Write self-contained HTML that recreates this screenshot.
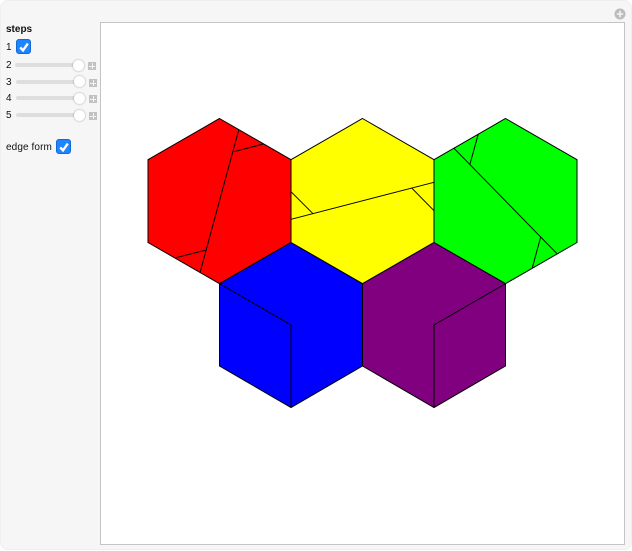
<!DOCTYPE html>
<html>
<head>
<meta charset="utf-8">
<style>
html,body{margin:0;padding:0;background:#fff;}
#page{position:relative;width:632px;height:551px;overflow:hidden;background:#fff;font-family:"Liberation Sans",sans-serif;color:#111;}
#panel{position:absolute;left:0;top:0;width:630px;height:548px;background:#f6f6f6;border:1px solid #efefef;border-radius:8px;}
#plot{position:absolute;left:100px;top:22px;width:523px;height:521px;background:#fff;border:1px solid #c4c4c4;}
.t{position:absolute;font-size:10px;line-height:12px;white-space:nowrap;letter-spacing:.1px;}
.cb{position:absolute;box-sizing:border-box;width:15px;height:15px;border-radius:3px;background:#1e84ff;border:.5px solid #1269d8;}
.track{position:absolute;height:4px;width:65px;background:#dedede;border-radius:2px;}
.thumb{position:absolute;width:11px;height:11px;border-radius:50%;background:#fff;box-shadow:0 0 2px rgba(0,0,0,.35);}
.plus{position:absolute;width:8px;height:8px;background:#c2c2c2;}
.plus:before{content:"";position:absolute;left:1px;top:3.5px;width:6px;height:1px;background:#f4f4f4;}
.plus:after{content:"";position:absolute;left:3.5px;top:1px;width:1px;height:6px;background:#f4f4f4;}
</style>
</head>
<body>
<div id="page">
<div id="panel"></div>
<div id="plot"></div>

<div class="t" style="left:6px;top:24px;font-weight:bold;letter-spacing:0;">steps</div>
<div class="t" style="left:6px;top:42px;">1</div>
<div class="cb" style="left:15.5px;top:39px;"><svg width="14" height="14" viewBox="0 0 14 14" style="position:absolute;left:0;top:0"><path d="M3.2 7.4 L6 10.4 L10.8 3.6" fill="none" stroke="#fff" stroke-width="2.4"/></svg></div>

<div class="t" style="left:6px;top:60px;">2</div>
<div class="track" style="left:15px;top:63px;"></div>
<div class="thumb" style="left:73px;top:59.5px;"></div>
<div class="plus" style="left:88px;top:62px;"></div>

<div class="t" style="left:6px;top:77px;">3</div>
<div class="track" style="left:15.5px;top:80px;"></div>
<div class="thumb" style="left:73.5px;top:76px;"></div>
<div class="plus" style="left:89px;top:79px;"></div>

<div class="t" style="left:6px;top:93px;">4</div>
<div class="track" style="left:16px;top:96px;"></div>
<div class="thumb" style="left:73.5px;top:93px;"></div>
<div class="plus" style="left:89px;top:95px;"></div>

<div class="t" style="left:6px;top:110px;">5</div>
<div class="track" style="left:15.5px;top:113px;"></div>
<div class="thumb" style="left:73.5px;top:109.5px;"></div>
<div class="plus" style="left:89px;top:112px;"></div>

<div class="t" style="left:6px;top:142px;">edge form</div>
<div class="cb" style="left:56px;top:139px;"><svg width="14" height="14" viewBox="0 0 14 14" style="position:absolute;left:0;top:0"><path d="M3.2 7.4 L6 10.4 L10.8 3.6" fill="none" stroke="#fff" stroke-width="2.4"/></svg></div>

<svg width="14" height="14" viewBox="0 0 14 14" style="position:absolute;left:613px;top:7px">
<circle cx="7" cy="7" r="5.5" fill="#bcbcbc"/>
<path d="M3.8 7 H10.2 M7 3.8 V10.2" stroke="#f4f4f4" stroke-width="1.6"/>
</svg>

<svg width="632" height="551" viewBox="0 0 632 551" style="position:absolute;left:0;top:0">
<g stroke="#000" stroke-width="1" stroke-linejoin="miter" fill="none">
<polygon points="219.5,118.5 291,159.7 291,242.5 219.5,283.7 148,242.5 148,159.7" fill="#ff0000"/>
<polygon points="362.5,118.5 434,159.7 434,242.5 362.5,283.7 291,242.5 291,159.7" fill="#ffff00"/>
<polygon points="505.5,118.5 577,159.7 577,242.5 505.5,283.7 434,242.5 434,159.7" fill="#00ff00"/>
<polygon points="291,242.5 362.5,283.7 362.5,366 291,407.5 219.5,366 219.5,283.7" fill="#0000ff"/>
<polygon points="434,242.5 505.5,283.7 505.5,366 434,407.5 362.5,366 362.5,283.7" fill="#800080"/>
<path d="M238.7 130 L200 272.7 M234 151.7 L263.3 144 M205 250.3 L176 257.7"/>
<path d="M291 219.3 L434 182.3 M291 191.7 L313 213.7 M412 188.3 L434 210.7"/>
<path d="M454 148.3 L557 253.7 M478.3 134 L469.7 165 M540.7 237 L532.3 267.7"/>
<path d="M219.5 283.7 L291 325 L291 407.5"/>
<path d="M505.5 283.7 L434 325 L434 407.5"/>
</g>
</svg>
</div>
</body>
</html>
